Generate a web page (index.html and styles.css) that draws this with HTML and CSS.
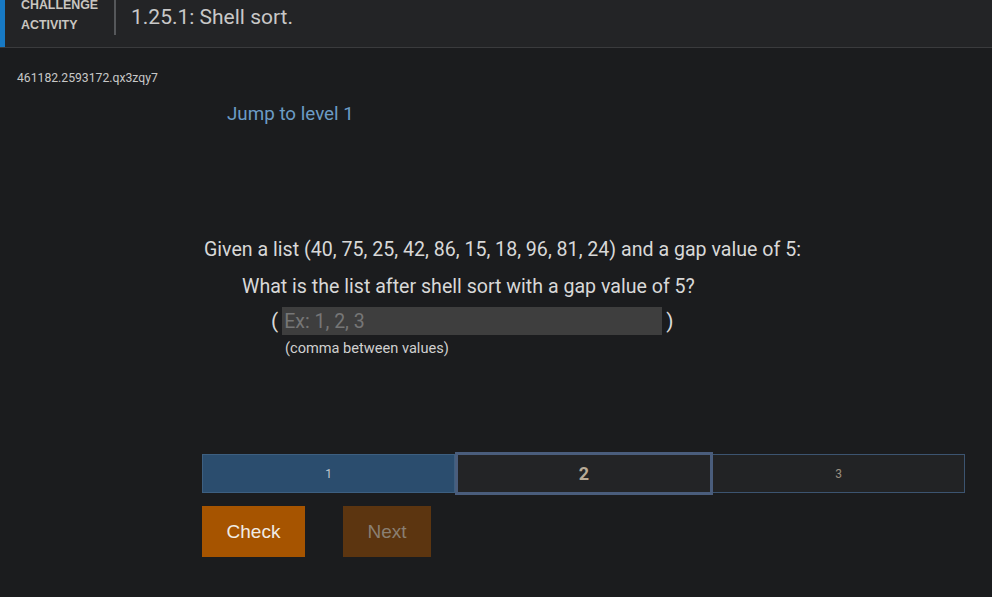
FILE: index.html
```html
<!DOCTYPE html>
<html>
<head>
<meta charset="utf-8">
<link rel="stylesheet" href="styles.css">
</head>
<body>
<header class="topbar">
  <div class="accent"></div>
  <div class="label">CHALLENGE<br>ACTIVITY</div>
  <div class="divider"></div>
  <div class="title">1.25.1: Shell sort.</div>
</header>
<main class="page">
  <div class="activity-id">461182.2593172.qx3zqy7</div>
  <div class="content">
    <div class="jump">Jump to level 1</div>
    <div class="prompt">Given a list (40, 75, 25, 42, 86, 15, 18, 96, 81, 24) and a gap value of 5:</div>
    <div class="question">What is the list after shell sort with a gap value of 5?</div>
    <div class="answer-row">
      <span class="paren">(</span>
      <input class="answer" type="text" placeholder="Ex: 1, 2, 3">
      <span class="paren">)</span>
    </div>
    <div class="hint">(comma between values)</div>
    <div class="levels">
      <div class="level done">1</div>
      <div class="level current">2</div>
      <div class="level todo">3</div>
    </div>
    <div class="actions">
      <button class="btn check">Check</button>
      <button class="btn next">Next</button>
    </div>
  </div>
</main>
</body>
</html>
```

FILE: styles.css
```css
* { box-sizing: border-box; }
html, body {
  margin: 0;
  padding: 0;
  background: #1b1c1e;
  height: 100%;
}
body {
  font-family: Roboto, "Liberation Sans", sans-serif;
  color: #d6d6d6;
  overflow: hidden;
}
.topbar {
  display: flex;
  align-items: flex-start;
  height: 48px;
  background: #232426;
  border-bottom: 1px solid #3a3b3d;
}
.accent {
  width: 5px;
  height: 47px;
  background: #1779c4;
}
.label {
  font-family: "Liberation Sans", Arial, sans-serif;
  font-weight: bold;
  font-size: 12.4px;
  line-height: 20px;
  color: #c9c6c0;
  margin-left: 16px;
  margin-top: -5px;
  width: 93px;
}
.divider {
  width: 2px;
  height: 35px;
  background: #55575a;
}
.title {
  font-size: 21px;
  color: #c8c8c8;
  margin-left: 15px;
  margin-top: 5px;
  line-height: 24px;
}
.activity-id {
  font-size: 12.2px;
  color: #c8c8c8;
  padding: 23px 0 0 17px;
  line-height: 14px;
}
.content {
  margin-left: 202px;
  width: 763px;
}
.jump {
  font-size: 18.8px;
  color: #6c9cc6;
  margin-left: 25px;
  margin-top: 18px;
  line-height: 22px;
}
.prompt {
  font-size: 19.6px;
  margin-left: 2px;
  margin-top: 113px;
  line-height: 24px;
  color: #d8d8d8;
}
.question {
  font-size: 19.6px;
  margin-left: 40px;
  margin-top: 13px;
  line-height: 24px;
  color: #d8d8d8;
}
.answer-row {
  display: flex;
  align-items: center;
  margin-left: 69px;
  margin-top: 8px;
  height: 28px;
}
.paren {
  font-size: 21px;
  color: #d8d8d8;
  line-height: 28px;
}
.answer {
  width: 380px;
  height: 28px;
  margin: 0 4px 0 4px;
  border: none;
  outline: none;
  background: #3e3e3e;
  color: #d8d8d8;
  font-family: Roboto, "Liberation Sans", sans-serif;
  font-size: 19.5px;
  padding: 0 2px;
}
.answer::placeholder {
  color: #767676;
}
.hint {
  font-size: 14.6px;
  color: #d0d0d0;
  margin-left: 83px;
  margin-top: 4px;
  line-height: 18px;
}
.levels {
  display: flex;
  align-items: center;
  margin-top: 97px;
  height: 39px;
}
.level {
  display: flex;
  align-items: center;
  justify-content: center;
  font-size: 12px;
}
.done {
  width: 253px;
  height: 39px;
  background: #2b4d6e;
  border: 1px solid #3d5f80;
  color: #c0c8d0;
}
.current {
  width: 258px;
  height: 43px;
  background: #232426;
  border: 3px solid #4a5d7c;
  font-size: 18px;
  font-weight: bold;
  color: #b8aa96;
}
.todo {
  width: 252px;
  height: 39px;
  background: #222325;
  border: 1px solid #3c5470;
  border-left: none;
  color: #9a8f80;
}
.actions {
  display: flex;
  gap: 38px;
  margin-top: 13px;
}
.btn {
  height: 51px;
  border: none;
  font-family: "Liberation Sans", Arial, sans-serif;
  font-size: 19px;
  padding: 0;
}
.check {
  width: 103px;
  background: #a65400;
  color: #f0ece6;
}
.next {
  width: 88px;
  background: #5c3510;
  color: #8a7f72;
}
```
